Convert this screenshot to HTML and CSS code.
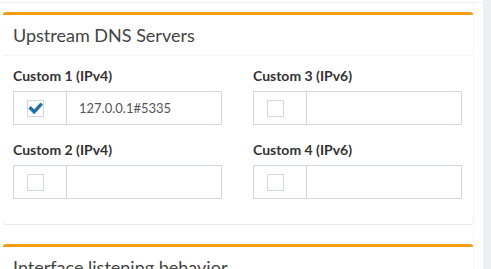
FILE: index.html
```html
<!DOCTYPE html>
<html lang="en">
    <head>
        <meta charset="UTF-8">
        <meta name="viewport" content="width=device-width, initial-scale=1.0">
        <link rel="stylesheet" href="styles.css">
    </head>
    <body>
        <div class="wrapper">
            <div class="content">
                <div class="top-edge"></div>
                <div class="column">
                    <div class="box">
                        <div class="box-header">
                            <h3 class="box-title">Upstream DNS Servers</h3>
                        </div>
                        <div class="box-body">
                            <div class="dns-grid">
                                <div class="form-group">
                                    <label for="custom1">Custom 1 (IPv4)</label>
                                    <div class="input-group">
                                        <span class="addon"><span class="check checked">
                                            <svg viewBox="0 0 17 17" width="17" height="17"><polyline points="3.8,8.4 7.2,11.8 13.6,4.8" fill="none" stroke="#1e6fa3" stroke-width="3.4" stroke-linecap="square"/></svg>
                                        </span></span>
                                        <input type="text" id="custom1" value="127.0.0.1#5335">
                                    </div>
                                </div>
                                <div class="form-group">
                                    <label for="custom3">Custom 3 (IPv6)</label>
                                    <div class="input-group">
                                        <span class="addon"><span class="check"></span></span>
                                        <input type="text" id="custom3">
                                    </div>
                                </div>
                                <div class="form-group">
                                    <label for="custom2">Custom 2 (IPv4)</label>
                                    <div class="input-group">
                                        <span class="addon"><span class="check"></span></span>
                                        <input type="text" id="custom2">
                                    </div>
                                </div>
                                <div class="form-group">
                                    <label for="custom4">Custom 4 (IPv6)</label>
                                    <div class="input-group">
                                        <span class="addon"><span class="check"></span></span>
                                        <input type="text" id="custom4">
                                    </div>
                                </div>
                            </div>
                        </div>
                    </div>
                    <div class="box">
                        <div class="box-header">
                            <h3 class="box-title">Interface listening behavior</h3>
                        </div>
                    </div>
                </div>
            </div>
            <div class="side-strip"></div>
        </div>
    </body>
</html>
```
FILE: styles.css
```css
* {
    margin: 0;
    padding: 0;
    box-sizing: border-box;
}

body {
    font-family: 'Lato', 'Liberation Sans', sans-serif;
    background-color: #ffffff;
    color: #333;
    overflow: hidden;
}

.wrapper {
    display: flex;
    height: 269px;
}

.content {
    width: 483px;
}

.top-edge {
    height: 3px;
    border-bottom: 1px solid #f0f0f0;
}

.column {
    width: 474px;
    padding: 9px 0 0 3px;
    border-right: 1px solid #f6f6f6;
    height: 266px;
}

.side-strip {
    flex: 1;
    background-color: #ecf0f5;
}

.box {
    width: 470px;
    background-color: #ffffff;
    border-top: 3px solid #f39c12;
    border-radius: 3px;
    box-shadow: 0 1px 1px rgba(0, 0, 0, 0.1);
    margin-bottom: 20px;
}

.box-header {
    padding: 10px;
    border-bottom: 1px solid #f4f4f4;
}

.box-title {
    font-size: 18px;
    font-weight: normal;
    line-height: 20px;
    color: #444;
}

.box-body {
    padding: 10px;
}

.dns-grid {
    display: grid;
    grid-template-columns: 209px 209px;
    column-gap: 31px;
}

.form-group {
    margin-bottom: 15px;
}

.form-group label {
    display: block;
    font-size: 14px;
    font-weight: bold;
    line-height: 20px;
    margin-bottom: 5px;
    color: #333;
}

.input-group {
    display: flex;
    height: 34px;
    border: 1px solid #d2d6de;
}

.addon {
    width: 53px;
    border-right: 1px solid #d2d6de;
    display: flex;
    align-items: center;
    padding-left: 13px;
}

.check {
    width: 17px;
    height: 17px;
    border: 1px solid #d2d6de;
    display: block;
    position: relative;
}

.check svg {
    position: absolute;
    left: -1px;
    top: -1px;
}

.input-group input {
    flex: 1;
    min-width: 0;
    border: none;
    outline: none;
    padding: 0 12px;
    font-family: 'Lato', 'Liberation Sans', sans-serif;
    font-size: 13px;
    color: #555;
    background: transparent;
}
```
